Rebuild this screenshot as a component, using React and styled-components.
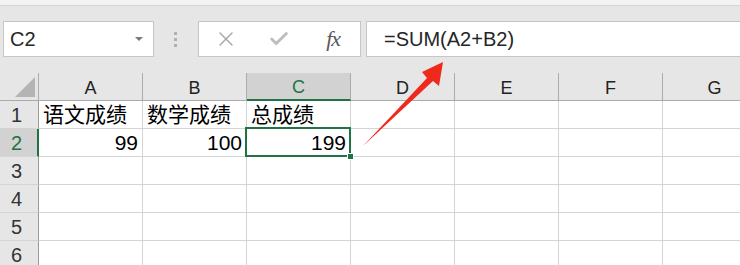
import React from 'react';
import styled, { createGlobalStyle, css } from 'styled-components';
import { X, Check } from 'lucide-react';

const GlobalStyle = createGlobalStyle`
  body {
    margin: 0;
    background: #e6e6e6;
    overflow: hidden;
    font-family: "Liberation Sans", "Noto Sans CJK SC", sans-serif;
  }
`;

const Page = styled.div`
  position: relative;
  width: 740px;
  height: 265px;
  overflow: hidden;
  background: #e6e6e6;
`;

const TopStrip = styled.div`
  height: 5px;
  background: #f3f3f3;
  border-bottom: 1px solid #d4d4d4;
`;

const FormulaBar = styled.div`
  display: flex;
  align-items: stretch;
  height: 36px;
  padding: 15px 0 16px 3px;
`;

const Box = styled.div`
  box-sizing: border-box;
  background: #fff;
  border: 1px solid #c6c6c6;
  display: flex;
  align-items: center;
`;

const NameBox = styled(Box)`
  width: 151px;
  padding: 0 10px 0 6px;
  justify-content: space-between;
  font-size: 20px;
  color: #262626;
`;

const DropArrow = styled.span`
  width: 0;
  height: 0;
  border-left: 4px solid transparent;
  border-right: 4px solid transparent;
  border-top: 4px solid #7a7a7a;
`;

const Grip = styled.div`
  width: 46px;
  display: flex;
  flex-direction: column;
  align-items: center;
  justify-content: center;
  gap: 3px;
  margin-left: -2px;
  span {
    width: 3px;
    height: 3px;
    background: #b0b0b0;
  }
`;

const ButtonBox = styled(Box)`
  width: 163px;
  display: grid;
  grid-template-columns: repeat(3, 1fr);
`;

const FxButton = styled.span`
  display: flex;
  align-items: center;
  justify-content: center;
  color: ${(p) => p.color || '#a6a6a6'};
  font-family: "Liberation Serif", serif;
  font-style: italic;
  font-size: 22px;
  font-weight: 400;
  letter-spacing: -1px;
`;

const FormulaInput = styled(Box)`
  flex: 1;
  margin-left: 5px;
  margin-right: -10px;
  padding-left: 17px;
  font-size: 20px;
  color: #262626;
`;

const Grid = styled.div`
  display: grid;
  grid-template-columns: 39px repeat(7, 104px);
  grid-auto-rows: 28px;
`;

const Cell = styled.div`
  position: relative;
  box-sizing: border-box;
  background: #fff;
  border-right: 1px solid #d4d4d4;
  border-bottom: 1px solid #d4d4d4;
  display: flex;
  align-items: flex-end;
  justify-content: ${(p) => (p.$num ? 'flex-end' : 'flex-start')};
  padding: 0 4px 1px 4px;
  font-size: 21px;
  line-height: 24px;
  color: #000;
  white-space: nowrap;
  ${(p) =>
    p.$selected &&
    css`
      &::after {
        content: '';
        position: absolute;
        left: -2px;
        top: -2px;
        right: -1px;
        bottom: -1px;
        border: 2px solid #217346;
      }
      &::before {
        content: '';
        position: absolute;
        right: -4px;
        bottom: -4px;
        width: 5px;
        height: 5px;
        background: #217346;
        border: 1px solid #fff;
        z-index: 2;
      }
    `}
`;

const ColHead = styled.div`
  box-sizing: border-box;
  background: ${(p) => (p.$active ? '#d2d2d2' : '#e6e6e6')};
  border-right: 1px solid #ababab;
  border-bottom: ${(p) => (p.$active ? '2px solid #217346' : '1px solid #ababab')};
  display: flex;
  align-items: center;
  justify-content: center;
  padding-top: 3px;
  font-size: 18px;
  color: ${(p) => (p.$active ? '#217346' : '#222')};
`;

const RowHead = styled.div`
  box-sizing: border-box;
  background: ${(p) => (p.$active ? '#d2d2d2' : '#e6e6e6')};
  border-right: ${(p) => (p.$active ? '2px solid #217346' : '1px solid #9b9b9b')};
  border-bottom: 1px solid #d4d4d4;
  display: flex;
  align-items: flex-end;
  padding: 0 0 1px 11px;
  font-size: 20px;
  line-height: 24px;
  color: ${(p) => (p.$active ? '#217346' : '#333')};
`;

const Corner = styled.div`
  box-sizing: border-box;
  background: #e6e6e6;
  border-right: 1px solid #ababab;
  border-bottom: 1px solid #ababab;
  display: flex;
  align-items: flex-end;
  justify-content: flex-end;
  padding: 0 3px 3px 0;
  &::after {
    content: '';
    width: 0;
    height: 0;
    border-left: 20px solid transparent;
    border-bottom: 20px solid #b4b4b4;
  }
`;

const Annotation = styled.svg`
  position: absolute;
  left: 0;
  top: 0;
  pointer-events: none;
`;

const columns = ['A', 'B', 'C', 'D', 'E', 'F', 'G'];
const data = {
  1: ['语文成绩', '数学成绩', '总成绩'],
  2: [99, 100, 199],
};

const App = () => (
  <Page>
    <GlobalStyle />
    <TopStrip />
    <FormulaBar>
      <NameBox>
        C2
        <DropArrow />
      </NameBox>
      <Grip>
        <span />
        <span />
        <span />
      </Grip>
      <ButtonBox>
        <FxButton>
          <X size={24} strokeWidth={1.4} />
        </FxButton>
        <FxButton color="#bdbdbd">
          <Check size={22} strokeWidth={3.2} />
        </FxButton>
        <FxButton color="#595959">fx</FxButton>
      </ButtonBox>
      <FormulaInput>=SUM(A2+B2)</FormulaInput>
    </FormulaBar>
    <Grid>
      <Corner />
      {columns.map((c) => (
        <ColHead key={c} $active={c === 'C'}>
          {c}
        </ColHead>
      ))}
      {[1, 2, 3, 4, 5, 6].map((r) => (
        <React.Fragment key={r}>
          <RowHead $active={r === 2}>{r}</RowHead>
          {columns.map((c, i) => {
            const v = data[r] ? data[r][i] : undefined;
            return (
              <Cell
                key={c}
                $num={typeof v === 'number'}
                $selected={r === 2 && c === 'C'}
              >
                {v}
              </Cell>
            );
          })}
        </React.Fragment>
      ))}
    </Grid>
    <Annotation width="740" height="265" viewBox="0 0 740 265">
      <polygon
        points="363,146 427,78 422,72 443,62 439,86 433,81"
        fill="#f0291d"
      />
    </Annotation>
  </Page>
);

export default App;
